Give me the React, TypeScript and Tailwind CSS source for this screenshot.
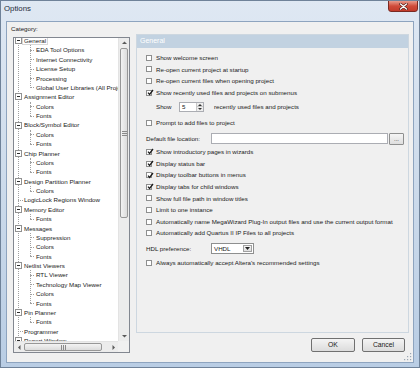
import React from 'react';

type TreeNode = { label: string; kids?: string[] };

const ROW = 9.39;

const TREE: TreeNode[] = [
  { label: 'General', kids: ['EDA Tool Options', 'Internet Connectivity', 'License Setup', 'Processing', 'Global User Libraries (All Projects)'] },
  { label: 'Assignment Editor', kids: ['Colors', 'Fonts'] },
  { label: 'Block/Symbol Editor', kids: ['Colors', 'Fonts'] },
  { label: 'Chip Planner', kids: ['Colors', 'Fonts'] },
  { label: 'Design Partition Planner', kids: ['Colors'] },
  { label: 'LogicLock Regions Window' },
  { label: 'Memory Editor', kids: ['Fonts'] },
  { label: 'Messages', kids: ['Suppression', 'Colors', 'Fonts'] },
  { label: 'Netlist Viewers', kids: ['RTL Viewer', 'Technology Map Viewer', 'Colors', 'Fonts'] },
  { label: 'Pin Planner', kids: ['Fonts'] },
  { label: 'Programmer' },
  { label: 'Report Window', kids: ['Colors', 'Fonts'] },
];

function Arrow({ dir }: { dir: 'up' | 'down' | 'left' | 'right' }) {
  const d = {
    up: 'M1 4 L3.5 1.5 L6 4 Z',
    down: 'M1 2 L3.5 4.5 L6 2 Z',
    left: 'M4.5 1 L2 3.5 L4.5 6 Z',
    right: 'M2.5 1 L5 3.5 L2.5 6 Z',
  }[dir];
  return (
    <svg width="7" height={dir === 'up' || dir === 'down' ? 6 : 7} viewBox={dir === 'up' || dir === 'down' ? '0 0 7 6' : '0 0 7 7'}>
      <path d={d} fill="#5a5a5a" />
    </svg>
  );
}

function Check({ checked }: { checked?: boolean }) {
  return (
    <span className="relative w-[6px] h-[6px] border border-[#8e8f8f] bg-white shrink-0">
      {checked && (
        <svg className="absolute -left-[0.5px] -top-[1.5px]" width="7" height="7" viewBox="0 0 7 7">
          <path d="M1 3.6 L2.6 5.4 L6 1" stroke="#1c1c1c" strokeWidth="1.3" fill="none" />
        </svg>
      )}
    </span>
  );
}

function CheckRow({ label, checked }: { label: string; checked?: boolean }) {
  return (
    <div className="h-[11.6px] flex items-center gap-[4px] pl-[9px] whitespace-nowrap">
      <Check checked={checked} />
      <span>{label}</span>
    </div>
  );
}

function WinButton({ label, w }: { label: string; w: string }) {
  return (
    <div className={`${w} h-[14px] flex items-center justify-center border border-[#707070] rounded-[2px] bg-gradient-to-b from-[#f4f4f4] to-[#dcdcdc] text-[6.8px]`}>
      {label}
    </div>
  );
}

function Tree() {
  return (
    <div className="w-[117px] h-[316px] border border-[#828790] bg-white grid grid-cols-[1fr_11px] grid-rows-[1fr_11px]">
      {/* tree content */}
      <div className="relative overflow-hidden whitespace-nowrap">
        <div className="relative -mt-[2px] leading-[9.39px]">
          <span className="absolute left-[4px] top-[4.5px] bottom-0 border-l border-dotted border-[#a0a0a0]" />
          {TREE.map((n) => (
            <div key={n.label}>
              <div className="relative h-[9.39px] pl-[10px]">
                {n.kids ? (
                  <span className="absolute left-[1px] top-[1.2px] w-[7px] h-[7px] border border-[#919191] bg-white flex items-center justify-center">
                    <span className="w-[3px] h-px bg-[#2a2a2a]" />
                  </span>
                ) : (
                  <span className="absolute left-[4px] top-[4.5px] w-[5px] border-t border-dotted border-[#a0a0a0]" />
                )}
                <span className={n.label === 'General' ? 'outline outline-1 outline-[#d8d8d8] px-[1px] -ml-[1px]' : ''}>{n.label}</span>
              </div>
              {n.kids && (
                <div className="relative">
                  <span
                    className="absolute left-[16px] top-0 border-l border-dotted border-[#a0a0a0]"
                    style={{ height: (n.kids.length - 1) * ROW + ROW / 2 }}
                  />
                  {n.kids.map((k, i) => (
                    <div key={k + i} className="relative h-[9.39px] pl-[22px]">
                      <span className="absolute left-[16px] top-[4.5px] w-[4px] border-t border-dotted border-[#a0a0a0]" />
                      {k}
                    </div>
                  ))}
                </div>
              )}
            </div>
          ))}
        </div>
      </div>

      {/* vertical scrollbar */}
      <div className="flex flex-col bg-[#ececec] border-l border-[#e3e3e3]">
        <div className="h-[10px] flex items-center justify-center">
          <Arrow dir="up" />
        </div>
        <div className="h-[170px] mx-[1px] rounded-[2px] border border-[#979797] bg-gradient-to-r from-[#f3f3f3] to-[#dcdcdc] flex flex-col items-center justify-center gap-[1px]">
          <span className="w-[5px] h-px bg-[#8a8a8a]" />
          <span className="w-[5px] h-px bg-[#8a8a8a]" />
          <span className="w-[5px] h-px bg-[#8a8a8a]" />
        </div>
        <div className="flex-1" />
        <div className="h-[10px] flex items-center justify-center">
          <Arrow dir="down" />
        </div>
      </div>

      {/* horizontal scrollbar */}
      <div className="flex bg-[#ececec] border-t border-[#e3e3e3]">
        <div className="w-[10px] flex items-center justify-center">
          <Arrow dir="left" />
        </div>
        <div className="w-[78px] my-[1px] rounded-[2px] border border-[#979797] bg-gradient-to-b from-[#f3f3f3] to-[#dcdcdc] flex items-center justify-center gap-[1px]">
          <span className="w-px h-[5px] bg-[#8a8a8a]" />
          <span className="w-px h-[5px] bg-[#8a8a8a]" />
          <span className="w-px h-[5px] bg-[#8a8a8a]" />
        </div>
        <div className="flex-1" />
        <div className="w-[10px] flex items-center justify-center">
          <Arrow dir="right" />
        </div>
      </div>
      <div className="bg-[#f0f0f0]" />
    </div>
  );
}

function GeneralPanel() {
  return (
    <div className="h-[299px] border border-[#cdd7e0] bg-[#f0f0f0]">
      <div className="h-[13px] bg-[#c2d2e1] text-white text-[7px] pl-[3px] flex items-center">General</div>
      <div className="pt-[4px]">
        <CheckRow label="Show welcome screen" />
        <CheckRow label="Re-open current project at startup" />
        <CheckRow label="Re-open current files when opening project" />
        <CheckRow label="Show recently used files and projects on submenus" checked />

        <div className="mt-[3.6px] h-[10px] flex items-center pl-[19px]">
          <span className="w-[23px]">Show</span>
          <div className="w-[25px] h-[10px] border border-[#abadb3] bg-white flex">
            <span className="flex-1 pl-[2px] leading-[8px]">5</span>
            <div className="w-[7px] flex flex-col border-l border-[#c8c8c8] bg-[#eeeeee]">
              <div className="flex-1 flex items-center justify-center border-b border-[#c8c8c8]">
                <svg width="4" height="2" viewBox="0 0 4 2"><path d="M0 2 L2 0 L4 2 Z" fill="#333" /></svg>
              </div>
              <div className="flex-1 flex items-center justify-center">
                <svg width="4" height="2" viewBox="0 0 4 2"><path d="M0 0 L2 2 L4 0 Z" fill="#333" /></svg>
              </div>
            </div>
          </div>
          <span className="ml-[10px] whitespace-nowrap">recently used files and projects</span>
        </div>

        <div className="mt-[5px]">
          <CheckRow label="Prompt to add files to project" />
        </div>

        <div className="mt-[4.4px] h-[12px] flex items-start pl-[9px]">
          <span className="w-[65px] h-[11px] flex items-center whitespace-nowrap">Default file location:</span>
          <div className="w-[177px] h-[11px] border border-[#abadb3] bg-white" />
          <div className="ml-[1px] w-[15px] h-[12px] border border-[#8e8f8f] rounded-[1px] bg-gradient-to-b from-[#f5f5f5] to-[#dedede] flex items-center justify-center leading-none text-[6px]">
            ...
          </div>
        </div>

        <div className="mt-[1.2px]">
          <CheckRow label="Show introductory pages in wizards" checked />
          <CheckRow label="Display status bar" checked />
          <CheckRow label="Display toolbar buttons in menus" checked />
          <CheckRow label="Display tabs for child windows" checked />
          <CheckRow label="Show full file path in window titles" />
          <CheckRow label="Limit to one instance" />
          <CheckRow label="Automatically name MegaWizard Plug-In output files and use the current output format" />
          <CheckRow label="Automatically add Quartus II IP Files to all projects" />
        </div>

        <div className="mt-[4px] h-[11px] flex items-center pl-[9px]">
          <span className="w-[65px] whitespace-nowrap">HDL preference:</span>
          <div className="w-[43px] h-[11px] border border-[#8e8f8f] bg-white flex">
            <span className="flex-1 pl-[2px] leading-[9px]">VHDL</span>
            <div className="w-[9px] my-[1px] mr-[1px] border border-[#a0a0a0] bg-gradient-to-b from-[#f5f5f5] to-[#dedede] flex items-center justify-center">
              <svg width="5" height="3" viewBox="0 0 5 3"><path d="M0 0 L2.5 3 L5 0 Z" fill="#222" /></svg>
            </div>
          </div>
        </div>

        <div className="mt-[3.2px]">
          <CheckRow label="Always automatically accept Altera's recommended settings" />
        </div>
      </div>
    </div>
  );
}

export default function App() {
  return (
    <div className="w-[420px] h-[368px] overflow-hidden bg-gradient-to-b from-[#dfe8f3] via-[#cddbeb] to-[#b9cde4] border border-[#6f8299] font-['Liberation_Sans',Arial,sans-serif] text-[#1a1a1a] text-[6.2px] select-none">
      {/* Title bar */}
      <div className="h-[20px] flex justify-between items-start">
        <span className="pl-[3px] pt-[3px] text-[7.8px] leading-[10px] text-[#1e2b3a]">Options</span>
        <div className="mr-[1px] -mt-px w-[30px] h-[12px] rounded-b-[3px] border border-[#7a2a22] bg-gradient-to-b from-[#e79a8c] via-[#cf4b3a] to-[#c23b2a] flex items-center justify-center">
          <svg width="9" height="7" viewBox="0 0 9 7">
            <path d="M1.5 1 L7.5 6 M7.5 1 L1.5 6" stroke="#4a1a14" strokeWidth="2.6" strokeLinecap="round" />
            <path d="M1.5 1 L7.5 6 M7.5 1 L1.5 6" stroke="#ffffff" strokeWidth="1.4" strokeLinecap="round" />
          </svg>
        </div>
      </div>

      {/* Client area */}
      <div className="ml-[5px] w-[408px] h-[342px] border border-[#8ea4bf] bg-[#f0f0f0] flex relative">
        <div className="ml-[6px] w-[117px] flex flex-col">
          <span className="mt-[2px] -ml-[2px] h-[9px] leading-[9px]">Category:</span>
          <div className="mt-[4px]">
            <Tree />
          </div>
        </div>
        <div className="ml-[6px] mt-[12px] w-[273px] flex flex-col">
          <GeneralPanel />
          <div className="mt-[5px] flex justify-end gap-[7px] pr-[4px]">
            <WinButton label="OK" w="w-[44px]" />
            <WinButton label="Cancel" w="w-[43px]" />
          </div>
        </div>
        {/* size grip */}
        <svg className="absolute right-[1px] bottom-[1px]" width="9" height="9" viewBox="0 0 9 9">
          {[[7, 1], [7, 4], [4, 4], [7, 7], [4, 7], [1, 7]].map(([x, y], i) => (
            <rect key={i} x={x} y={y} width="1.2" height="1.2" fill="#9aa6b2" />
          ))}
        </svg>
      </div>
    </div>
  );
}
